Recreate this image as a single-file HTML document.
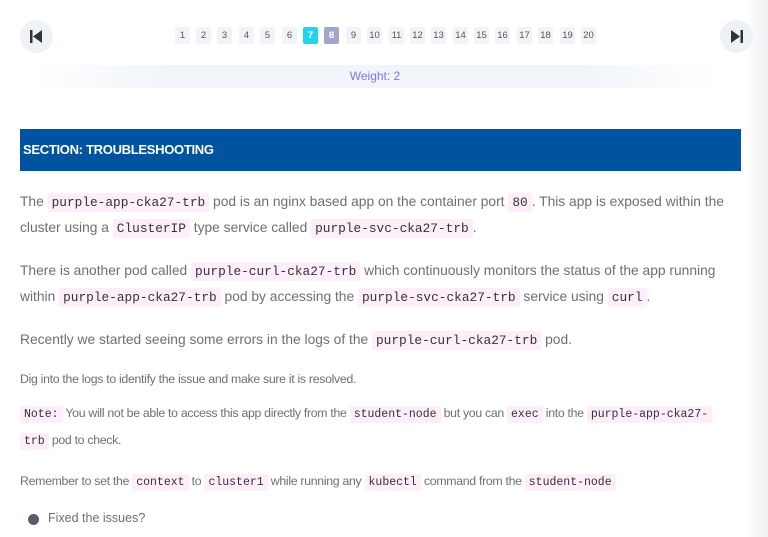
<!DOCTYPE html>
<html><head><style>
body{margin:0;width:768px;height:537px;background:#fff;position:relative;overflow:hidden;font-family:"Liberation Sans",sans-serif;}
.rs{position:absolute;right:0;top:0;width:22px;height:537px;background:linear-gradient(90deg,#fff,#eef0f3);}
.nb{position:absolute;top:20px;width:33px;height:33px;border-radius:50%;background:#eef1f6;}
.pg{position:absolute;top:27px;height:17px;width:15px;background:#f1f3f7;font-size:9.5px;color:#555;text-align:center;line-height:17px;border-radius:2px;}
.w{position:absolute;left:30px;width:690px;top:65px;height:23px;background:linear-gradient(90deg,#fff,#f1f5fa 20%,#f1f5fa 80%,#fff);text-align:center;line-height:23px;font-size:12px;color:#8373f0;}
.hd{position:absolute;left:20px;top:129px;width:721px;height:42px;background:#00539f;color:#fff;font-weight:bold;font-size:13px;line-height:42px;box-sizing:border-box;padding-left:3px;letter-spacing:-0.3px;}
.l{position:absolute;left:20px;color:#6e6e78;white-space:nowrap;}
.b{font-size:13.8px;}
.s{font-size:12.3px;letter-spacing:-0.3px;}
code{font-family:"Liberation Mono",monospace;background:#fdeefa;color:#333;padding:2px 4px;border-radius:2px;letter-spacing:0;}
.b code{font-size:12.8px;}
.s code{font-size:11.5px;}
</style></head><body>
<div class="rs"></div>
<div class="nb" style="left:20px"><svg width="33" height="33"><rect x="10" y="10" width="2.5" height="13" fill="#333"/><path d="M22 10 L13 16.5 L22 23Z" fill="#333"/></svg></div>
<div class="nb" style="left:720px"><svg width="33" height="33"><path d="M11 10 L20 16.5 L11 23Z" fill="#333"/><rect x="20.5" y="10" width="2.5" height="13" fill="#333"/></svg></div>
<div class="pg" style="left:175px">1</div><div class="pg" style="left:196px">2</div><div class="pg" style="left:217px">3</div><div class="pg" style="left:239px">4</div><div class="pg" style="left:260px">5</div><div class="pg" style="left:282px">6</div>
<div class="pg" style="left:303px;background:#22d3ee;color:#fff;font-weight:bold">7</div>
<div class="pg" style="left:324px;background:#a3a6cc;color:#fff;font-weight:bold">8</div>
<div class="pg" style="left:346px">9</div><div class="pg" style="left:367px">10</div><div class="pg" style="left:389px">11</div><div class="pg" style="left:410px">12</div><div class="pg" style="left:431px">13</div><div class="pg" style="left:453px">14</div><div class="pg" style="left:474px">15</div><div class="pg" style="left:495px">16</div><div class="pg" style="left:517px">17</div><div class="pg" style="left:538px">18</div><div class="pg" style="left:560px">19</div><div class="pg" style="left:581px">20</div>
<div class="w">Weight: 2</div>
<div class="hd">SECTION: TROUBLESHOOTING</div>
<div class="l b" style="top:194px">The <code>purple-app-cka27-trb</code> pod is an nginx based app on the container port <code>80</code>. This app is exposed within the</div>
<div class="l b" style="top:220px">cluster using a <code>ClusterIP</code> type service called <code>purple-svc-cka27-trb</code>.</div>
<div class="l b" style="top:263px">There is another pod called <code>purple-curl-cka27-trb</code> which continuously monitors the status of the app running</div>
<div class="l b" style="top:289px">within <code>purple-app-cka27-trb</code> pod by accessing the <code>purple-svc-cka27-trb</code> service using <code>curl</code>.</div>
<div class="l b" style="top:332px">Recently we started seeing some errors in the logs of the <code>purple-curl-cka27-trb</code> pod.</div>
<div class="l s" style="top:372px">Dig into the logs to identify the issue and make sure it is resolved.</div>
<div class="l s" style="top:406px"><code>Note:</code> You will not be able to access this app directly from the <code>student-node</code> but you can <code>exec</code> into the <code>purple-app-cka27-</code></div>
<div class="l s" style="top:433px"><code>trb</code> pod to check.</div>
<div class="l s" style="top:474px">Remember to set the <code>context</code> to <code>cluster1</code> while running any <code>kubectl</code> command from the <code>student-node</code></div>
<div style="position:absolute;left:28px;top:514px;width:11px;height:11px;border-radius:50%;background:#5a5d6a"></div>
<div class="l" style="left:48px;top:511px;font-size:12.5px">Fixed the issues?</div>
</body></html>
